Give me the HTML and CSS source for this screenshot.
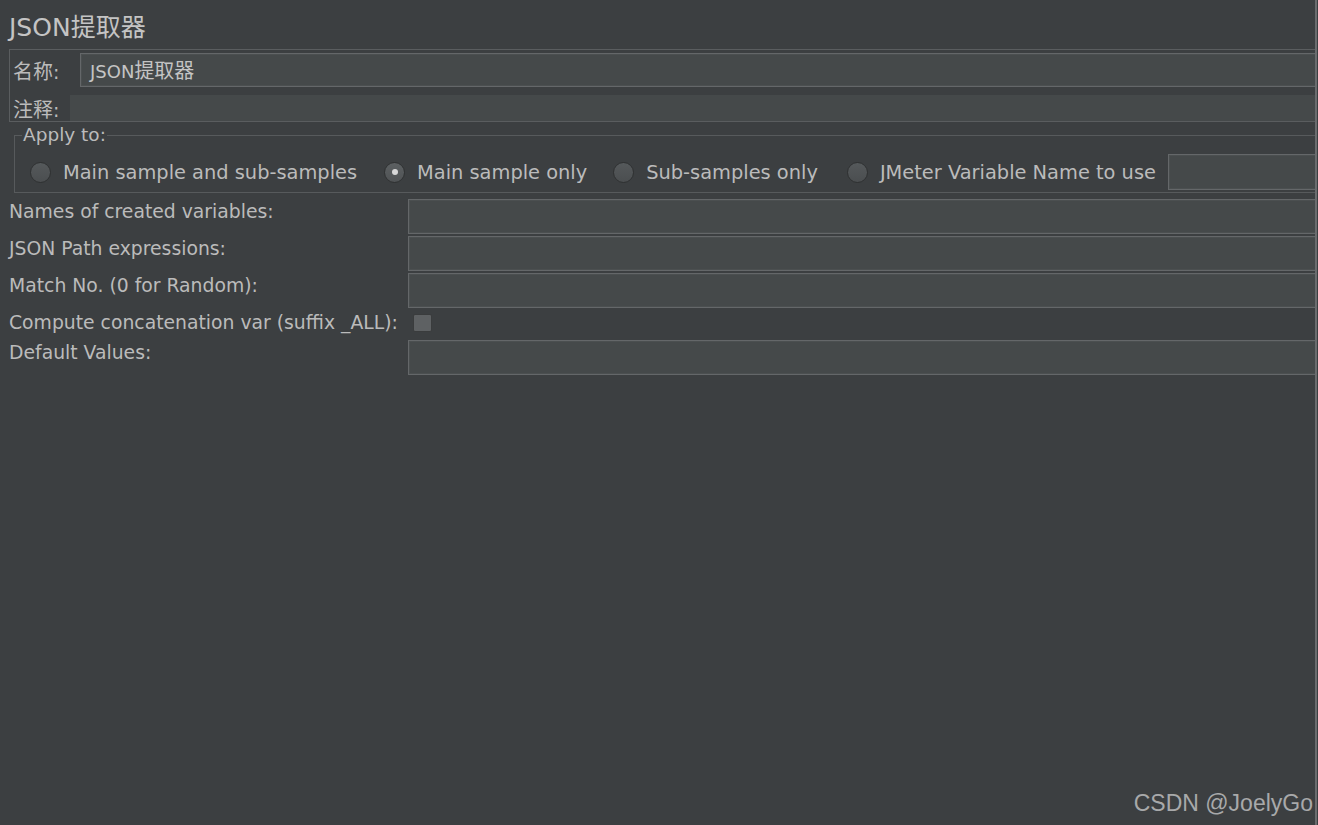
FILE: index.html
```html
<!DOCTYPE html>
<html lang="zh">
<head>
<meta charset="utf-8">
<title>JSON提取器</title>
<link rel="stylesheet" href="styles.css">
</head>
<body>
<div class="window">
  <div class="main">
    <div class="title">JSON<span class="cjk-title">提取器</span></div>

    <div class="name-panel">
      <div class="name-row">
        <label class="name-label"><span class="cjk">名称</span>:</label>
        <div class="text-field name-field">JSON<span class="cjk">提取器</span></div>
      </div>
      <div class="comment-row">
        <label class="comment-label"><span class="cjk">注释</span>:</label>
        <div class="comment-field"></div>
      </div>
    </div>

    <fieldset class="apply">
      <legend class="apply-legend">Apply to:</legend>
      <div class="radio-row">
        <div class="option"><span class="radio"></span><span class="option-text">Main sample and sub-samples</span></div>
        <div class="option"><span class="radio checked"></span><span class="option-text">Main sample only</span></div>
        <div class="option"><span class="radio"></span><span class="option-text">Sub-samples only</span></div>
        <div class="option last"><span class="radio"></span><span class="option-text">JMeter Variable Name to use</span></div>
        <div class="text-field var-field"></div>
      </div>
    </fieldset>

    <div class="form">
      <div class="form-label">Names of created variables:</div>
      <div class="text-field form-field"></div>
      <div class="form-label">JSON Path expressions:</div>
      <div class="text-field form-field"></div>
      <div class="form-label">Match No. (0 for Random):</div>
      <div class="text-field form-field"></div>
      <div class="form-label">Compute concatenation var (suffix _ALL):</div>
      <div class="check-cell"><span class="checkbox"></span></div>
      <div class="form-label">Default Values:</div>
      <div class="text-field form-field"></div>
    </div>

    <div class="watermark">CSDN @JoelyGo</div>
  </div>
  <div class="splitter"></div>
  <div class="edge"></div>
</div>
</body>
</html>
```

FILE: styles.css
```css
html, body {
  margin: 0;
  padding: 0;
  height: 100%;
  background: #3c3f41;
  overflow: hidden;
}

body {
  font-family: "DejaVu Sans", "Noto Sans CJK SC", sans-serif;
  color: #bbbbbb;
}

.window {
  display: flex;
  height: 825px;
}

.main {
  position: relative;
  flex: 0 0 1315px;
  width: 1315px;
  overflow: hidden;
  padding: 8px 0 0 9px;
  box-sizing: border-box;
}

.splitter {
  flex: 0 0 2px;
  background: #6a6c6e;
}

.edge {
  flex: 1;
  background: #3c3f41;
}

.title {
  height: 34px;
  line-height: 34px;
  font-size: 25px;
  color: #c4c4c4;
  margin-bottom: 7px;
  white-space: nowrap;
}

.cjk-title {
  font-family: "Noto Sans CJK SC", sans-serif;
  font-size: 25px;
}

.cjk {
  font-family: "Noto Sans CJK SC", sans-serif;
  font-size: 20px;
}

/* name / comment panel */
.name-panel {
  border-top: 1px solid #5a5d5f;
  border-left: 1px solid #5a5d5f;
  border-bottom: 1px solid #5a5d5f;
  margin-right: -20px;
  padding: 3px 0 0 3px;
  height: 68px;
}

.name-row {
  display: flex;
  align-items: center;
  height: 34px;
}

.name-label {
  flex: 0 0 67px;
  font-size: 19px;
  white-space: nowrap;
}

.text-field {
  background: #45494a;
  border: 1px solid #646769;
  box-shadow: inset 0 0 0 1px #4b4f50;
  box-sizing: border-box;
}

.name-field {
  flex: 1;
  height: 34px;
  line-height: 32px;
  padding-left: 9px;
  font-size: 18px;
  color: #c4c4c4;
}

.comment-row {
  display: flex;
  align-items: center;
  height: 26px;
  margin-top: 8px;
}

.comment-label {
  flex: 0 0 57px;
  font-size: 19px;
  white-space: nowrap;
}

.comment-field {
  flex: 1;
  height: 26px;
  background: #45494a;
}

/* apply to */
.apply {
  margin: 1px -20px 0 5px;
  padding: 0 0 0 15px;
  border: 1px solid #575a5c;
  border-right: none;
  height: 70px;
  box-sizing: border-box;
  min-width: 0;
}

.apply-legend {
  padding: 0 1px;
  margin-left: -8px;
  font-size: 18.5px;
  line-height: 24px;
}

.radio-row {
  display: flex;
  align-items: center;
  height: 44px;
  margin-top: 3px;
  white-space: nowrap;
}

.option {
  display: flex;
  align-items: center;
  margin-right: 27px;
}

.option:nth-child(2) {
  margin-right: 26px;
}

.option:nth-child(3) {
  margin-right: 29px;
}

.option.last {
  margin-right: 12px;
}

.radio {
  width: 21px;
  height: 21px;
  border-radius: 50%;
  background: linear-gradient(#55595b, #4b4e50);
  border: 1px solid #2f3132;
  box-sizing: border-box;
  margin-right: 12px;
  position: relative;
}

.radio.checked {
  background: linear-gradient(#5c6062, #505355);
}

.radio.checked::after {
  content: "";
  position: absolute;
  left: 6.5px;
  top: 6.5px;
  width: 6px;
  height: 6px;
  border-radius: 50%;
  background: #d8d8d8;
}

.option-text {
  font-size: 19.4px;
}

.var-field {
  flex: 1;
  height: 36px;
}

/* form rows */
.form {
  display: grid;
  grid-template-columns: 399px 1fr;
  grid-template-rows: 35px 35px 35px 28px 35px;
  row-gap: 2px;
  margin-top: 6px;
  margin-right: -20px;
}

.form-label {
  font-size: 18.8px;
  line-height: 25px;
  white-space: nowrap;
}

.form-field {
  height: 35px;
}

.check-cell {
  padding: 4px 0 0 5px;
}

.checkbox {
  display: block;
  width: 19px;
  height: 18px;
  border-radius: 2px;
  background: #5e6163;
  border: 1px solid #3a3c3d;
  box-sizing: border-box;
}

.watermark {
  position: absolute;
  right: 2px;
  bottom: 8px;
  font-family: "Liberation Sans", Arial, sans-serif;
  font-size: 23px;
  color: #a8a9aa;
}
```
